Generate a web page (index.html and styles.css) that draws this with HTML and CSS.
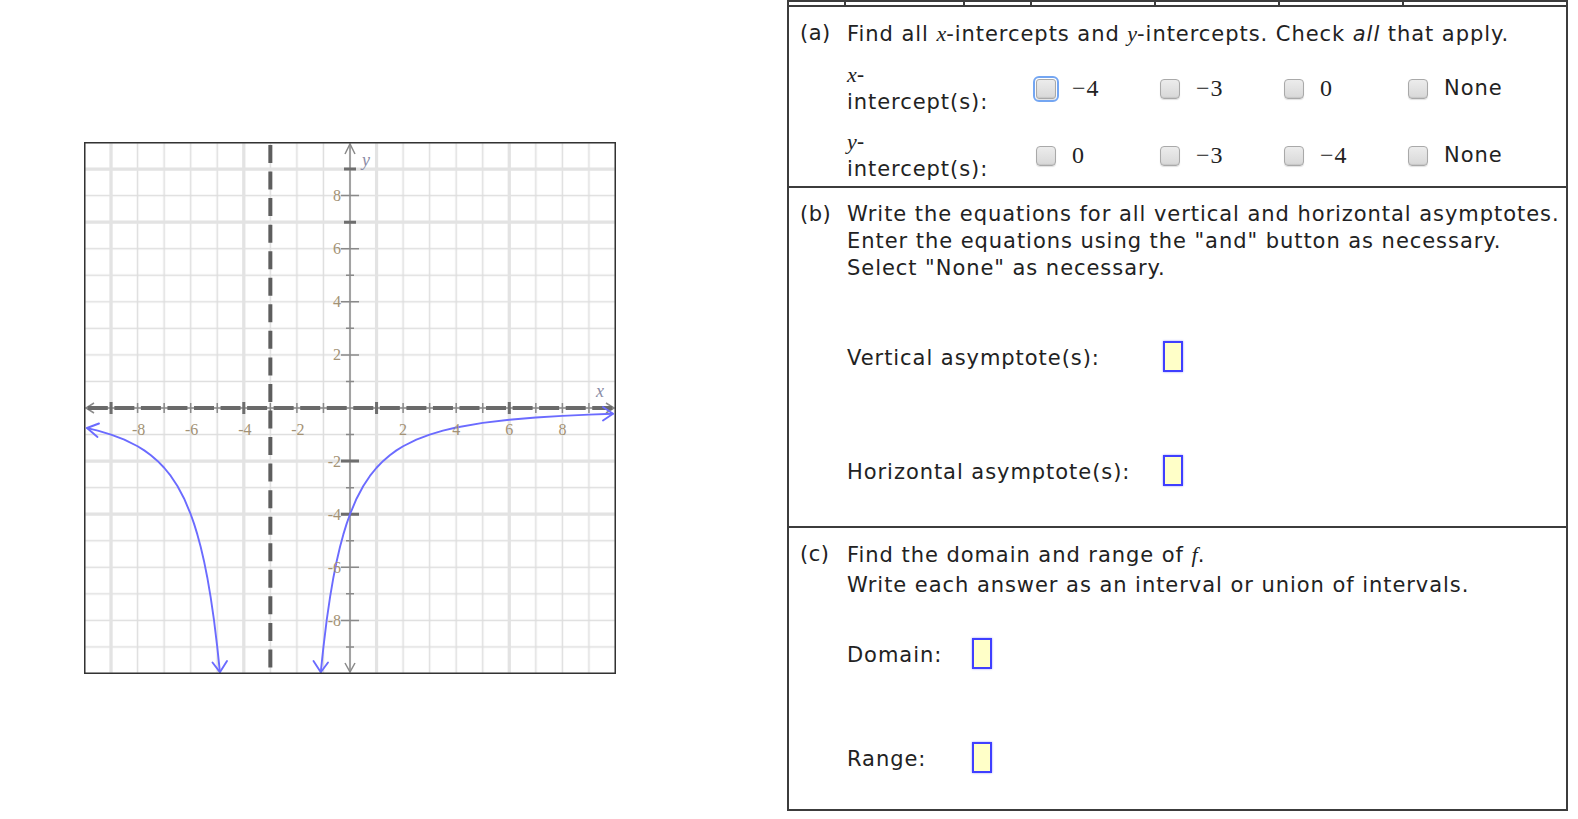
FILE: index.html
```html
<!DOCTYPE html>
<html>
<head>
<meta charset="utf-8">
<link rel="stylesheet" href="styles.css">
</head>
<body>
<div class="page">
  <div class="graph-wrap">
    <svg class="graph" width="532" height="532" viewBox="0 0 532 532">
      <defs>
        <pattern id="grid" x="-12.775" y="-12.775" width="26.55" height="26.55" patternUnits="userSpaceOnUse">
          <path d="M13.275 0V26.55M0 13.275H26.55" stroke="#dedede" stroke-width="1.5" fill="none"/>
        </pattern>
      </defs>
      <rect width="532" height="532" fill="#fff"/>
      <rect width="532" height="532" fill="url(#grid)"/>
      <g stroke="#e3e3e3" stroke-width="3.2">
        <path d="M27.05 0V532M159.8 0V532M292.55 0V532M425.3 0V532"/>
        <path d="M0 27.05H532M0 80.15H532M0 319.1H532M0 372.2H532"/>
      </g>
      <!-- axes -->
      <g stroke="#8a8a8a" stroke-width="1.5" fill="none">
        <path d="M266 2V530M2 266H530"/>
        <path d="M261 12L266 2L271 12M261 521L266 530L271 521M10 261L2 266L10 271M522 261L530 266L522 271"/>
        <path d="M262 27.05H270M262 80.15H270M262 133.25H270M262 186.35H270M262 239.45H270M262 292.55H270M262 345.65H270M262 398.75H270M262 451.85H270M262 504.95H270"/>
        <path d="M257 53.6H275M257 106.7H275M257 159.8H275M257 212.9H275M257 319.1H275M257 372.2H275M257 425.3H275M257 478.4H275"/>
        <path d="M27.05 261V271M53.6 261V271M80.15 261V271M106.7 261V271M133.25 261V271M159.8 261V271M186.35 261V271M212.9 261V271M239.45 261V271M292.55 261V271M319.1 261V271M345.65 261V271M372.2 261V271M398.75 261V271M425.3 261V271M451.85 261V271M478.4 261V271M504.95 261V271"/>
      </g>
      <g stroke="#6e6e6e" stroke-width="3">
        <path d="M260 27.05H272M260 80.15H272M257 319.1H275M257 372.2H275"/>
        <path d="M27.05 260V272M159.8 260V272M292.55 260V272M425.3 260V272"/>
      </g>
      <!-- asymptotes -->
      <path d="M0 266H532" stroke="#6a6a6a" stroke-width="4" stroke-dasharray="20 6.55" stroke-dashoffset="-3.8" fill="none"/>
      <path d="M186.35 0V532" stroke="#5e5e5e" stroke-width="4" stroke-dasharray="18 8.55" stroke-dashoffset="-3" fill="none"/>
      <!-- curve -->
      <g stroke="#6b6bff" stroke-width="1.9" fill="none" stroke-linejoin="round" stroke-linecap="round">
        <polyline points="3.16,286.08 13.78,288.62 27.05,292.55 40.33,297.6 53.6,304.23 60.24,308.36 66.88,313.2 73.51,318.92 80.15,325.74 86.79,333.97 93.43,344.02 100.06,356.49 106.7,372.2 110.02,381.63 113.34,392.39 116.66,404.71 119.98,418.93 123.29,435.45 126.61,454.8 129.93,477.66 133.25,504.95 134.58,517.36 135.9,530.2"/>
        <polyline points="236.8,530.2 238.12,517.36 239.45,504.95 242.77,477.66 246.09,454.8 249.41,435.45 252.73,418.93 256.04,404.71 259.36,392.39 262.68,381.63 266,372.2 272.64,356.49 279.28,344.02 285.91,333.97 292.55,325.74 299.19,318.92 305.83,313.2 312.46,308.36 319.1,304.23 332.38,297.6 345.65,292.55 358.93,288.62 372.2,285.51 398.75,280.93 425.3,277.8 451.85,275.56 478.4,273.9 504.95,272.64 528.85,271.74"/>
        <path d="M15 281.5L3 286L13.5 295"/>
        <path d="M128.5 520.5L135.9 530.2L143 519"/>
        <path d="M229.5 519L236.8 530.2L244 520.5"/>
        <path d="M519 265L529 271.7L519 278.5"/>
      </g>
      <!-- labels -->
      <g class="tick-label" text-anchor="middle">
        <text x="54.6" y="293">-8</text>
        <text x="107.7" y="293">-6</text>
        <text x="160.8" y="293">-4</text>
        <text x="213.9" y="293">-2</text>
        <text x="319.1" y="293">2</text>
        <text x="372.2" y="293">4</text>
        <text x="425.3" y="293">6</text>
        <text x="478.4" y="293">8</text>
      </g>
      <g class="tick-label" text-anchor="end">
        <text x="257" y="59.1">8</text>
        <text x="257" y="112.2">6</text>
        <text x="257" y="165.3">4</text>
        <text x="257" y="218.4">2</text>
        <text x="257" y="324.6">-2</text>
        <text x="257" y="377.7">-4</text>
        <text x="257" y="430.8">-6</text>
        <text x="257" y="483.9">-8</text>
      </g>
      <text class="axis-label" x="278" y="24">y</text>
      <text class="axis-label" x="512" y="255">x</text>
      <rect x="0.75" y="0.75" width="530.5" height="530.5" fill="none" stroke="#333" stroke-width="1.5"/>
    </svg>
  </div>

  <div class="panel">
    <div class="strip">
      <span class="cell w1"></span><span class="cell w2"></span><span class="cell w3"></span><span class="cell w4"></span><span class="cell w5"></span><span class="cell w6"></span><span class="cell w7"></span>
    </div>
    <div class="box">
      <section class="part part-a">
        <div class="tag">(a)</div>
        <div class="content">
          <p class="line">Find all <i class="m">x</i>-intercepts and <i class="m">y</i>-intercepts. Check <i>all</i> that apply.</p>
          <div class="irow">
            <div class="ilabel"><div class="line"><i class="m">x</i>-</div><div class="line">intercept(s):</div></div>
            <div class="opts">
              <label class="opt"><span class="cb focus"></span><span class="num">−4</span></label>
              <label class="opt"><span class="cb"></span><span class="num">−3</span></label>
              <label class="opt"><span class="cb"></span><span class="num">0</span></label>
              <label class="opt"><span class="cb"></span><span class="word">None</span></label>
            </div>
          </div>
          <div class="irow irow2">
            <div class="ilabel"><div class="line"><i class="m">y</i>-</div><div class="line">intercept(s):</div></div>
            <div class="opts">
              <label class="opt"><span class="cb"></span><span class="num">0</span></label>
              <label class="opt"><span class="cb"></span><span class="num">−3</span></label>
              <label class="opt"><span class="cb"></span><span class="num">−4</span></label>
              <label class="opt"><span class="cb"></span><span class="word">None</span></label>
            </div>
          </div>
        </div>
      </section>

      <section class="part part-b">
        <div class="tag">(b)</div>
        <div class="content">
          <p class="line">Write the equations for all vertical and horizontal asymptotes.</p>
          <p class="line">Enter the equations using the "and" button as necessary.</p>
          <p class="line">Select "None" as necessary.</p>
          <div class="arow arow-first">
            <span class="alabel wide">Vertical asymptote(s):</span><span class="ans"></span>
          </div>
          <div class="arow arow-next">
            <span class="alabel wide">Horizontal asymptote(s):</span><span class="ans"></span>
          </div>
        </div>
      </section>

      <section class="part part-c">
        <div class="tag">(c)</div>
        <div class="content">
          <p class="line first-c">Find the domain and range of <i class="m">f</i>.</p>
          <p class="line">Write each answer as an interval or union of intervals.</p>
          <div class="arow arow-dom">
            <span class="alabel narrow">Domain:</span><span class="ans"></span>
          </div>
          <div class="arow arow-range">
            <span class="alabel narrow">Range:</span><span class="ans"></span>
          </div>
        </div>
      </section>
    </div>
  </div>
</div>
</body>
</html>
```

FILE: styles.css
```css
html, body {
  margin: 0;
  padding: 0;
  background: #fff;
}

body {
  font-family: "DejaVu Sans", Verdana, sans-serif;
  font-size: 21px;
  letter-spacing: 0.95px;
  color: #222;
}

.page {
  display: flex;
  align-items: flex-start;
  padding-left: 84px;
}

.graph-wrap {
  margin-top: 142px;
  line-height: 0;
}

.graph {
  display: block;
}

.tick-label {
  font-family: "Liberation Serif", "Times New Roman", serif;
  font-size: 16px;
  letter-spacing: 0;
  fill: #a39275;
}

.axis-label {
  font-family: "Liberation Serif", "Times New Roman", serif;
  font-style: italic;
  font-size: 18px;
  letter-spacing: 0;
  fill: #8a8ca6;
}

/* panel */
.panel {
  margin-left: 171px;
  width: 781px;
}

.strip {
  display: flex;
  height: 3px;
  border-top: 2px solid #3c3c3c;
  border-left: 2px solid #3c3c3c;
  border-right: 2px solid #3c3c3c;
}

.cell {
  display: block;
  height: 100%;
  border-right: 2px solid #3c3c3c;
  box-sizing: border-box;
}

.cell.w1 { width: 57px; }
.cell.w2 { width: 119px; }
.cell.w3 { width: 67px; }
.cell.w4 { width: 124px; }
.cell.w5 { width: 124px; }
.cell.w6 { width: 124px; }
.cell.w7 { flex: 1; border-right: none; }

.box {
  border: 2px solid #3c3c3c;
}

.part {
  display: flex;
  box-sizing: border-box;
  padding: 13px 0 0 11px;
}

.part + .part {
  border-top: 2px solid #3c3c3c;
}

.part-a { height: 179px; }
.part-b { height: 340px; }
.part-c { height: 283px; }

.tag {
  width: 47px;
  flex: none;
  line-height: 27px;
  letter-spacing: 0.5px;
}

.content {
  flex: 1;
}

.line {
  margin: 0;
  line-height: 27px;
  white-space: nowrap;
}

i.m {
  font-family: "Liberation Serif", "Times New Roman", serif;
  font-size: 22px;
  letter-spacing: 0;
}

/* intercept rows */
.irow {
  display: flex;
  align-items: center;
  margin-top: 13px;
}

.irow2 {
  margin-top: 12px;
}

.ilabel {
  width: 189px;
  flex: none;
}

.opts {
  display: grid;
  grid-template-columns: repeat(4, 124px);
  align-items: center;
}

.opt {
  display: flex;
  align-items: center;
  gap: 16px;
}

.cb {
  display: block;
  width: 20px;
  height: 20px;
  box-sizing: border-box;
  border: 1px solid #a9a9a9;
  border-radius: 4px;
  background: linear-gradient(#ececec, #d8d8d8);
  box-shadow: inset 0 -1px 1px rgba(0,0,0,0.08), 0 1px 1px rgba(0,0,0,0.12);
}

.cb.focus {
  outline: 2px solid #74a6f2;
  outline-offset: 1px;
  border-radius: 3px;
}

.num {
  font-family: "Liberation Serif", "Times New Roman", serif;
  font-size: 24px;
  letter-spacing: 1px;
  line-height: 27px;
}

.word {
  line-height: 27px;
}

/* answer rows */
.arow {
  display: flex;
  align-items: flex-end;
  height: 31px;
}

.arow-first { margin-top: 59px; }
.arow-next { margin-top: 83px; }
.arow-dom { margin-top: 39px; }
.arow-range { margin-top: 73px; }

.first-c {
  margin-bottom: 3px;
}

.alabel {
  flex: none;
  line-height: 27px;
}

.alabel.wide { width: 316px; }
.alabel.narrow { width: 125px; }

.ans {
  display: block;
  width: 20px;
  height: 31px;
  box-sizing: border-box;
  border: 2px solid #3f3fff;
  background: #ffffc8;
  box-shadow: 0 0 2px #9a9aff;
}
```
